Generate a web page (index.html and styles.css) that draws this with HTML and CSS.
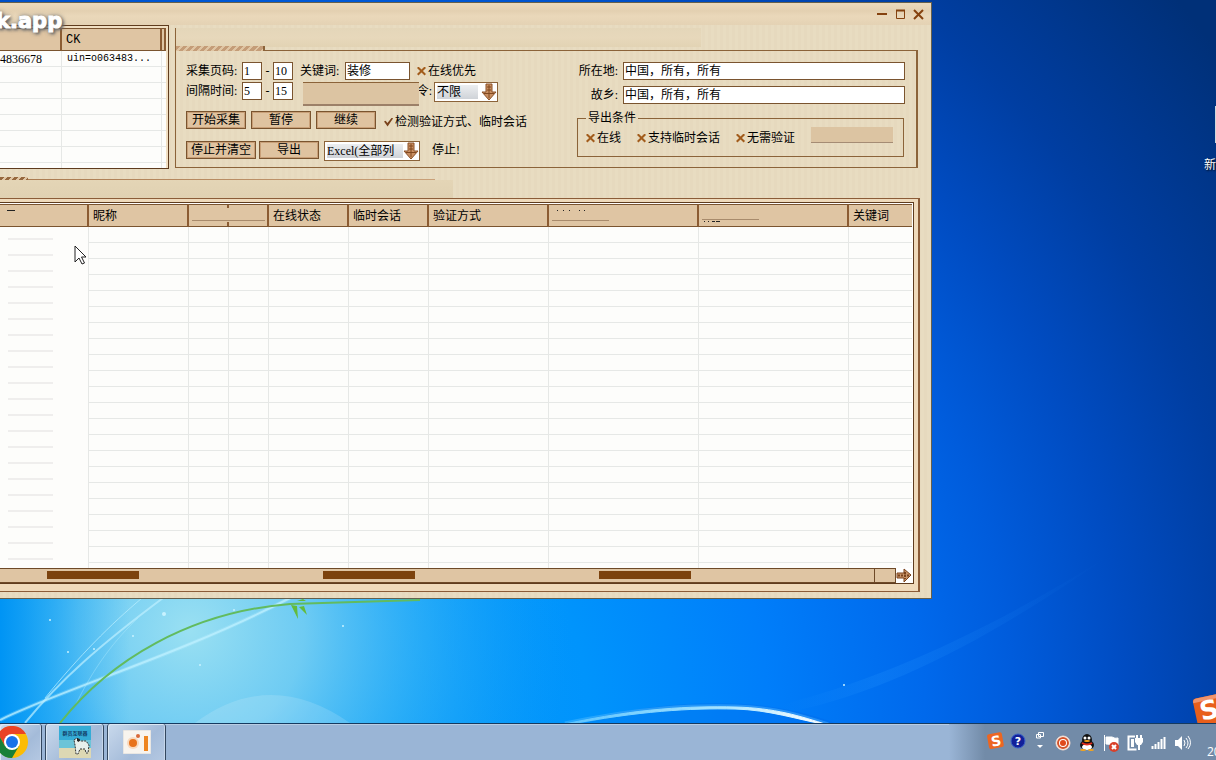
FILE: index.html
```html
<!DOCTYPE html>
<html lang="zh-CN">
<head>
    <meta charset="UTF-8">
    <meta name="viewport" content="width=device-width, initial-scale=1.0">
    <title>采集</title>
    <link rel="stylesheet" href="styles.css">
</head>
<body>
    <div class="desktop">
        <!-- 壁纸 -->
        <svg class="wallpaper" viewBox="0 0 1216 723" preserveAspectRatio="none">
            <defs>
                <radialGradient id="sky" gradientUnits="userSpaceOnUse" cx="320" cy="720" r="1120">
                    <stop offset="0" stop-color="#0a9cf8"/>
                    <stop offset="0.24" stop-color="#0094fc"/>
                    <stop offset="0.4" stop-color="#007efa"/>
                    <stop offset="0.54" stop-color="#0069ec"/>
                    <stop offset="0.62" stop-color="#005cdc"/>
                    <stop offset="0.72" stop-color="#004cc2"/>
                    <stop offset="0.83" stop-color="#003ea2"/>
                    <stop offset="1" stop-color="#003078"/>
                </radialGradient>
                <radialGradient id="glow" gradientUnits="userSpaceOnUse" cx="190" cy="630" r="380">
                    <stop offset="0" stop-color="#9ae0f2"/>
                    <stop offset="0.3" stop-color="#80d4f2" stop-opacity="0.85"/>
                    <stop offset="0.6" stop-color="#44bcf6" stop-opacity="0.55"/>
                    <stop offset="1" stop-color="#10a0fa" stop-opacity="0"/>
                </radialGradient>
                <linearGradient id="leftShade" x1="0" x2="1" y1="0" y2="0">
                    <stop offset="0" stop-color="#0094f4"/>
                    <stop offset="0.3" stop-color="#0a9cf4" stop-opacity="0.7"/>
                    <stop offset="1" stop-color="#20a8f4" stop-opacity="0"/>
                </linearGradient>
                <linearGradient id="arcLight" x1="0" x2="1" y1="0" y2="0">
                    <stop offset="0" stop-color="#5cc4ff"/>
                    <stop offset="0.6" stop-color="#a8e4ff"/>
                    <stop offset="1" stop-color="#ffffff"/>
                </linearGradient>
                <linearGradient id="ray" x1="0" x2="1" y1="0" y2="0">
                    <stop offset="0" stop-color="#2a9aff" stop-opacity="0"/>
                    <stop offset="0.3" stop-color="#2a9aff" stop-opacity="0.2"/>
                    <stop offset="1" stop-color="#2a9aff" stop-opacity="0"/>
                </linearGradient>
            </defs>
            <rect width="1216" height="723" fill="url(#sky)"/>
            <rect width="600" height="423" y="300" fill="url(#glow)"/>
            <rect width="130" height="423" y="300" fill="url(#leftShade)"/>
            <path d="M195 723 Q270 667 350 723Z" fill="#fff" opacity="0.14"/>
            <g fill="none" stroke="#bdf0ff">
                <path d="M0 720 C60 690 180 655 290 598" stroke-width="4" opacity="0.25"/>
                <path d="M0 720 C60 690 180 655 290 598" stroke-width="2" opacity="0.75"/>
                <path d="M25 723 C60 680 100 645 163 598" stroke-width="2" opacity="0.7"/>
                <path d="M45 698 C80 655 110 625 142 598" opacity="0.7"/>
                <path d="M75 706 C95 665 115 640 138 618" opacity="0.35"/>
            </g>
            <path d="M60 723 C110 660 190 612 290 604 L420 600" fill="none" stroke="#62bb5e" stroke-width="2"/>
            <path d="M291 605 l7 14 -1 -13z M299 607 l8 8 -3 -9z M297 601 l6 -2 3 2z" fill="#63bb3c"/>
            <g fill="#c8f2ff">
                <circle cx="164" cy="614" r="2"/><circle cx="68" cy="652" r="1"/><circle cx="94" cy="649" r="1"/>
                <circle cx="234" cy="610" r="1"/><circle cx="133" cy="636" r="1"/><circle cx="50" cy="620" r="1"/>
                <circle cx="343" cy="626" r="1"/><circle cx="200" cy="665" r="1"/><circle cx="844" cy="685" r="1"/>
            </g>
            <path d="M780 705 C880 680 990 630 1110 555 C1010 625 900 690 790 712Z" fill="url(#ray)"/>
            <path d="M570 723 Q730 683 835 723Z" fill="#0060e0" opacity="0.2"/>
            <path d="M565 724 C640 708 690 706 735 707 C775 708 800 716 828 725" fill="none" stroke="#7cd0ff" stroke-width="5" opacity="0.3"/>
            <path d="M565 724 C640 708 690 706 735 707 C775 708 800 716 828 725 C795 719 770 710 735 709 C690 708 640 711 565 725Z" fill="url(#arcLight)" stroke="url(#arcLight)"/>
        </svg>

        <!-- 程序窗口 -->
        <div class="window">
            <div class="title_bar">
                <button class="win_btn" aria-label="最小化"><svg width="11" height="11"><path d="M0 5h10" stroke="#85420f" stroke-width="2"/></svg></button>
                <button class="win_btn" aria-label="最大化"><svg width="11" height="11"><path d="M1.500 1.500h8v8h-8z" fill="none" stroke="#85420f"/><path d="M1 1.500h9" stroke="#85420f" stroke-width="2"/></svg></button>
                <button class="win_btn" aria-label="关闭"><svg width="11" height="11"><path d="M1 1l9 9M10 1l-9 9" stroke="#85420f" stroke-width="2"/></svg></button>
            </div>

            <div class="top">
                <div class="account">
                    <table class="account_table">
                        <colgroup><col class="c_qq"><col class="c_ck"><col></colgroup>
                        <thead>
                            <tr><th></th><th>CK</th><th></th></tr>
                        </thead>
                        <tbody>
                            <tr><td class="qq">4836678</td><td class="ck">uin=o063483...</td><td></td></tr>
                        </tbody>
                    </table>
                </div>

                <div class="panel">
                    <div class="tabs"></div>
                    <div class="panel_body">
                        <div class="left_form">
                            <div class="row">
                                <label for="page1">采集页码:</label>
                                <input class="num" id="page1" type="text" value="1">
                                <span class="dash">-</span>
                                <input class="num" type="text" value="10" aria-label="结束页码">
                                <label class="key_label" for="keyword">关键词:</label>
                                <input class="keyword" id="keyword" type="text" value="装修">
                                <label class="check online"><input type="checkbox">在线优先</label>
                            </div>
                            <div class="row">
                                <label for="time1">间隔时间:</label>
                                <input class="num" id="time1" type="text" value="5">
                                <span class="dash">-</span>
                                <input class="num" type="text" value="15" aria-label="最大间隔">
                                <span class="cover"></span>
                                <label class="age" for="age">令:</label>
                                <span class="select age_select">
                                    <select id="age"><option>不限</option></select>
                                    <svg width="16" height="18"><use href="#arrow"/></svg>
                                </span>
                            </div>
                            <div class="row row_btn">
                                <button class="btn">开始采集</button>
                                <button class="btn">暂停</button>
                                <button class="btn">继续</button>
                                <label class="check verify"><input type="checkbox" checked>检测验证方式、临时会话</label>
                            </div>
                            <div class="row row_export">
                                <button class="btn btn_stop">停止并清空</button>
                                <button class="btn">导出</button>
                                <span class="select excel">
                                    <select aria-label="导出格式"><option>Excel(全部列</option></select>
                                    <svg width="16" height="18"><use href="#arrow"/></svg>
                                </span>
                                <span class="state">停止!</span>
                            </div>
                        </div>

                        <div class="right_form">
                            <div class="place">
                                <label for="place">所在地:</label>
                                <input id="place" type="text" value="中国，所有，所有">
                            </div>
                            <div class="place">
                                <label for="home">故乡:</label>
                                <input id="home" type="text" value="中国，所有，所有">
                            </div>
                            <fieldset>
                                <legend>导出条件</legend>
                                <div class="conditions">
                                    <label class="check"><input type="checkbox">在线</label>
                                    <label class="check"><input type="checkbox">支持临时会话</label>
                                    <label class="check"><input type="checkbox">无需验证</label>
                                    <span class="blank"></span>
                                </div>
                            </fieldset>
                        </div>
                    </div>
                </div>
            </div>

            <div class="strip"></div>

            <div class="frame">
                <div class="list">
                    <table class="list_table">
                        <colgroup>
                            <col class="w89"><col class="w100"><col class="w40"><col class="w40"><col class="w80">
                            <col class="w80"><col class="w120"><col class="w150"><col class="w150"><col>
                        </colgroup>
                        <thead>
                            <tr>
                                <th class="first"></th>
                                <th>昵称</th>
                                <th class="tick"></th>
                                <th class="tick_end"></th>
                                <th>在线状态</th>
                                <th>临时会话</th>
                                <th>验证方式</th>
                                <th class="worn"></th>
                                <th class="worn worn_low"></th>
                                <th>关键词</th>
                            </tr>
                        </thead>
                        <tbody>
                            <tr><td class="first"></td><td></td><td></td><td></td><td></td><td></td><td></td><td></td><td></td><td></td></tr>
                        </tbody>
                    </table>
                    <div class="scroll">
                        <div class="track"></div>
                        <div class="grip"></div>
                        <button class="scroll_btn" aria-label="向右">
                            <svg width="16" height="15"><path d="M1 5h7V1l7 6-7 7v-4H1z" fill="#c99468" stroke="#7a431c"/><path d="M2 7.500h11M9 4v7" stroke="#7a431c" stroke-width="2" stroke-dasharray="2 1"/></svg>
                        </button>
                    </div>
                </div>
            </div>
        </div>

        <div class="watermark">k.app</div>

        <!-- 桌面图标 -->
        <div class="folder"><i></i><span>新</span></div>
        <svg class="sogou" width="36" height="34" viewBox="0 0 36 34">
            <g transform="rotate(-12 17 17)"><rect x="3" y="3" width="30" height="29" rx="3" fill="#e85f1c"/><path d="M3 7q0-4 4-4h22q4 0 4 4z" fill="#f0946c"/>
            <text x="17" y="26" text-anchor="middle" font-family="DejaVu Sans" font-weight="bold" font-size="26" fill="#fff">S</text></g>
        </svg>
        <svg class="cursor" width="13" height="21"><path d="M1 1v16l4-4 3 6 2.500-1-3-6H12z" fill="#fff" stroke="#222"/></svg>
    </div>

    <!-- 任务栏 -->
    <div class="taskbar">
        <button class="task task_chrome" aria-label="Chrome">
            <svg width="32" height="32" viewBox="-16 -16 32 32">
                <circle r="16" fill="#fbbc05"/>
                <path d="M0-8H13.900A16 16 0 0 0-13.900-8L-7 4Z" fill="#ea4325"/>
                <path d="M-13.900-8A16 16 0 0 0 0 16L7 4-7 4Z" fill="#188038"/>
                <circle r="8" fill="#fff"/><circle r="6" fill="#1a73e8"/>
            </svg>
        </button>
        <button class="task" aria-label="采集工具">
            <svg width="32" height="32" viewBox="0 0 32 32">
                <rect width="32" height="23" fill="#35acd6"/><rect y="14" width="32" height="9" fill="#6cc4d8"/><rect y="22" width="32" height="10" fill="#ddd8b4"/>
                <text x="16" y="9" text-anchor="middle" font-family="Noto Sans CJK SC" font-weight="bold" font-size="5" fill="#123c66">群员互联器</text>
                <path d="M15 14l3-2 3 3h6l3 4-1 8h-2l-1-4h-5l-2 5h-2l-1-9z" fill="#e8f0ec" stroke="#333" stroke-dasharray="2 1"/>
                <path d="M18 12l3 1-1 3-2-1z" fill="#222"/>
            </svg>
        </button>
        <button class="task" aria-label="录屏">
            <svg width="28" height="24" viewBox="0 0 28 24">
                <rect width="28" height="24" fill="#f8f4ee" stroke="#d8d8d8"/>
                <circle cx="10" cy="13" r="6" fill="#f9d9bd"/><circle cx="10" cy="13" r="4" fill="#e8731c"/><circle cx="15" cy="6" r="2" fill="#d9693a"/>
                <rect x="21" y="6" width="4" height="15" fill="#ee8520"/>
            </svg>
        </button>

        <div class="tray">
            <svg width="22" height="24" viewBox="0 0 22 24">
                <g transform="rotate(-10 11 11)"><rect x="3" y="3" width="15" height="15" rx="2" fill="#ec6622"/><text x="11" y="16" text-anchor="middle" font-family="DejaVu Sans" font-weight="bold" font-size="14" fill="#fff">S</text></g>
            </svg>
            <svg width="22" height="24" viewBox="0 0 22 24">
                <circle cx="11" cy="11" r="7" fill="#12209a" stroke="#3a62c8"/><text x="11" y="15" text-anchor="middle" font-family="DejaVu Sans" font-weight="bold" font-size="11" fill="#fff">?</text>
            </svg>
            <svg width="22" height="24" viewBox="0 0 22 24">
                <path d="M9.500 2.500h5v4h-5zM7.500 4.500h4v3.500h-4z" fill="#728ba8" stroke="#fff"/><path d="M8 15h6l-3 3z" fill="#fff"/>
            </svg>
            <svg viewBox="0 0 24 24"><circle cx="12" cy="13" r="7" fill="#fff" stroke="#f0d8cc"/><circle cx="12" cy="13" r="5" fill="#fff" stroke="#d4532a" stroke-width="2"/><circle cx="12" cy="13" r="3" fill="#e04a1c"/></svg>
            <svg viewBox="0 0 24 24">
                <ellipse cx="12" cy="15" rx="7" ry="5" fill="#111"/><ellipse cx="12" cy="10" rx="5" ry="6" fill="#111"/><ellipse cx="12" cy="17" rx="5" ry="3" fill="#fff"/>
                <circle cx="10" cy="8" r="1.500" fill="#fff"/><circle cx="14" cy="8" r="1.500" fill="#fff"/><ellipse cx="12" cy="11" rx="3" ry="1" fill="#f6a41a"/>
                <path d="M7 13q5 3 10 0" stroke="#e22f20" stroke-width="2" fill="none"/><ellipse cx="8" cy="20" rx="3" ry="1" fill="#f6a41a"/><ellipse cx="16" cy="20" rx="3" ry="1" fill="#f6a41a"/>
            </svg>
            <svg viewBox="0 0 24 24"><path d="M5.500 5v16M7 7h6q3 2 6 1v7h-6q-3-1-6-1z" fill="#fff" stroke="#fff"/><circle cx="15" cy="17" r="5" fill="#d8412b"/><path d="M13 15l4 4M17 15l-4 4" stroke="#fff" stroke-width="2"/></svg>
            <svg viewBox="0 0 24 24"><path d="M12 6.500H5.500v13h8" fill="none" stroke="#fff" stroke-width="2"/><rect x="8" y="9" width="3" height="8" fill="#fff"/><path d="M14 5v4M18 5v4M16 13v7" stroke="#fff" stroke-width="2"/><path d="M12 8h8v4l-2 3h-4l-2-3z" fill="#fff"/></svg>
            <svg viewBox="0 0 24 24"><path d="M5.500 16v3M8.500 14v5M11.500 12v7M14.500 9v10M17.500 7v12" stroke="#fff" stroke-width="2"/></svg>
            <svg viewBox="0 0 24 24"><path d="M4 10h3l4-4v14l-4-4H4z" fill="#fff"/><path d="M13 10q2 3 0 6M15 8q4 5 0 10M17 6q5 7 0 13" fill="none" stroke="#fff"/></svg>
            <span class="clock">20</span>
        </div>
    </div>

    <svg class="defs">
        <symbol id="arrow" viewBox="0 0 16 18">
            <path d="M5 1h6v8h4l-7 8-7-8h4z" fill="#c98f62" stroke="#8a5026"/>
            <path d="M8 2v13M3 10.500h10M6 4h4M6 7h4" stroke="#80481f" fill="none"/>
        </symbol>
    </svg>
</body>
</html>
```
FILE: styles.css
```css
*{
    box-sizing: border-box;
}
body{
    margin: 0;
    height: 100vh;
    display: flex;
    flex-direction: column;
    overflow: hidden;
    font: 12px/16px "Liberation Serif", "Noto Sans CJK SC", sans-serif;
    color: #000;
}
input, select, button{
    font: inherit;
    color: inherit;
    margin: 0;
}
.defs{
    display: none;
}

/* 桌面 */
.desktop{
    flex: 1;
    min-height: 0;
    position: relative;
    overflow: hidden;
}
.wallpaper{
    display: block;
    width: 100%;
    height: 100%;
}
.watermark{
    position: absolute;
    left: -4px;
    top: 8px;
    font: bold 21px/26px "DejaVu Sans", sans-serif;
    color: #fff;
    -webkit-text-stroke: 1px #fff;
    text-shadow: 2px 2px 3px #666, 0 0 4px #777, 1px 1px 5px #777;
}
.folder{
    position: absolute;
    right: 0;
    top: 106px;
    width: 12px;
    color: #fff;
    text-shadow: 1px 1px 2px #000;
}
.folder i{
    display: block;
    width: 1px;
    height: 37px;
    margin: 0 0 14px auto;
    background-color: #cfd8dc;
}
.sogou{
    position: absolute;
    right: -12px;
    bottom: -4px;
}
.cursor{
    position: absolute;
    left: 74px;
    top: 245px;
}

/* 窗口 */
.window{
    position: absolute;
    left: 0;
    top: 2px;
    right: 284px;
    bottom: 124px;
    display: flex;
    flex-direction: column;
    border: 1px solid #66604c;
    border-left: none;
    background: repeating-linear-gradient(90deg, #e6d9be 0 3px, #e8dcc1 3px 6px);
}
.title_bar{
    display: flex;
    flex: none;
    justify-content: flex-end;
    gap: 7px;
    height: 22px;
    padding: 0 7px;
    background: linear-gradient(#ecdabd, #e3d0b1 35%, #ead8ba 60%, #e4d2b4);
}
.win_btn{
    width: 11px;
    padding: 0;
    border: none;
    background: none;
}
.win_btn svg{
    display: block;
}
.top{
    display: flex;
    flex: none;
    height: 144px;
}

/* 账号表格 */
.account{
    flex: none;
    width: 169px;
    padding: 2px 2px 0 0;
    border: 1px solid #5f3c1e;
    border-left: none;
    background-color: #f1dfc2;
}
table{
    border-collapse: separate;
    border-spacing: 0;
    table-layout: fixed;
    width: 100%;
    height: 100%;
}
th{
    padding: 0 0 0 4px;
    text-align: left;
    font-weight: normal;
    background-color: #dfc5a3;
    border-right: 2px solid #8b5c33;
    border-top: 1px solid #7a542f;
    border-bottom: 1px solid #7a542f;
    white-space: nowrap;
}
td{
    padding: 0;
    vertical-align: top;
    border-right: 1px solid #e6e8e6;
    background: repeating-linear-gradient(#fdfdfb 0 15px, #e6e8e6 15px 16px);
}
.account_table th{
    height: 23px;
    font-family: "Liberation Mono", monospace;
}
.account_table td:last-child{
    border-right: none;
}
.c_qq{
    width: 62px;
}
.c_ck{
    width: 100px;
}
.qq{
    line-height: 16px;
}
.ck{
    padding-left: 5px;
    font: 10px/16px "Liberation Mono", monospace;
}

/* 设置面板 */
.panel{
    flex: 1;
    display: flex;
    flex-direction: column;
    margin: 3px 13px 1px 6px;
}
.tabs{
    position: relative;
    flex: none;
    height: 22px;
    border-left: 1px solid #8b6339;
    background: linear-gradient(#e4d6b9, #e7d8bb 50%, #e2d3b4) 0 0 / 525px 19px no-repeat;
}
.tabs::after{
    content: "";
    position: absolute;
    left: 0;
    bottom: -1px;
    width: 87px;
    height: 5px;
    border-right: 2px solid #8b6339;
    background: repeating-linear-gradient(135deg, #c49d78 0 3px, #dfc5a3 3px 5px);
}
.panel_body{
    flex: 1;
    display: flex;
    padding: 11px 11px 0 10px;
    border: 1px solid #8b6339;
    border-right-width: 2px;
}
.left_form{
    flex: none;
    width: 391px;
}
.row{
    display: flex;
    align-items: flex-start;
    height: 20px;
    line-height: 18px;
    white-space: nowrap;
}
.row > label:first-child{
    width: 56px;
}
.row input[type=text], .place input{
    height: 18px;
    padding: 0 1px;
    border: 1px solid #7a542f;
    border-radius: 0;
    background-color: #fff;
}
.row .num{
    width: 20px;
}
.dash{
    width: 11px;
    text-align: center;
}
.key_label{
    width: 45px;
    margin-left: 7px;
}
.row .keyword{
    width: 65px;
}
.check{
    display: flex;
    align-items: center;
}
.check input{
    appearance: none;
    width: 9px;
    height: 9px;
    margin-right: 2px;
    background-color: #a25c1c;
    clip-path: polygon(0 16%, 16% 0, 50% 34%, 84% 0, 100% 16%, 66% 50%, 100% 84%, 84% 100%, 50% 66%, 16% 100%, 0 84%, 34% 50%);
}
.check input:checked{
    background-color: #7a431c;
    clip-path: polygon(0 45%, 18% 35%, 38% 62%, 88% 0, 100% 12%, 40% 100%);
}
.online{
    margin-left: 7px;
}
.verify{
    height: 22px;
    margin-left: 3px;
}
.cover{
    width: 116px;
    height: 24px;
    margin: 0 0 0 10px;
    border-top: 1px solid #8b6339;
    border-bottom: 2px solid #9c8068;
    background-color: #dcc4a2;
}
.age{
    display: flex;
    justify-content: flex-end;
    width: 13px;
    margin-right: 2px;
    overflow: hidden;
}
.select{
    display: flex;
    align-items: center;
    height: 20px;
    border: 1px solid #8b6339;
    background-color: #fff;
}
.select select{
    flex: 1;
    min-width: 0;
    height: 14px;
    margin-left: 2px;
    padding: 0;
    appearance: none;
    border: none;
    border-radius: 0;
    line-height: 14px;
    background: linear-gradient(#eceef0, #cfd3d8);
}
.age_select{
    width: 64px;
}
.age_select select{
    margin-right: 3px;
}
.excel{
    width: 96px;
    margin-left: 2px;
}
.row_btn{
    gap: 5px;
    margin-top: 9px;
}
.row_export{
    gap: 3px;
    margin-top: 10px;
}
.btn{
    width: 60px;
    height: 18px;
    padding: 0;
    border: 1px solid #7a542f;
    box-shadow: inset 0 0 0 1px #c9a078;
    background-color: #dfc3a0;
    line-height: 16px;
}
.btn_stop{
    width: 70px;
}
.state{
    margin-left: 9px;
}
.right_form{
    flex: 1;
    min-width: 0;
}
.place{
    display: flex;
    height: 24px;
    line-height: 18px;
}
.place label{
    width: 46px;
    padding-right: 5px;
    text-align: right;
}
.place input{
    flex: 1;
    min-width: 0;
}
fieldset{
    height: 46px;
    margin: 1px 1px 0 0;
    padding: 0 10px 0 8px;
    border: 1px solid #8b6339;
    min-width: 0;
}
legend{
    padding: 0 2px;
    line-height: 14px;
}
.conditions{
    display: flex;
    gap: 16px;
    margin-top: 5px;
    white-space: nowrap;
}
.blank{
    width: 82px;
    height: 16px;
    margin: -3px 0 0 auto;
    border-bottom: 1px solid #a58c74;
    background-color: #dcc4a2;
}

/* 分隔条 */
.strip{
    position: relative;
    flex: none;
    height: 29px;
    background: linear-gradient(90deg, #a8794e, #c9a078) 0 10px / 435px 1px no-repeat,
        linear-gradient(#e4d5b6, #e0d1b2) 0 11px / 453px 18px no-repeat;
}
.strip::before{
    content: "";
    position: absolute;
    left: 0;
    top: 8px;
    width: 28px;
    height: 3px;
    background: repeating-linear-gradient(135deg, #96683e 0 3px, #dfc5a3 3px 5px);
}

/* 结果列表 */
.frame{
    flex: 1;
    display: flex;
    min-height: 0;
    margin: 0 11px 6px 0;
    padding: 3px 4px 7px 0;
    border: 1px solid #8b5c38;
    border-right-width: 2px;
    border-left: none;
    background-color: #efdabb;
}
.list{
    flex: 1;
    display: flex;
    flex-direction: column;
    min-width: 0;
    padding: 1px 1px 0 0;
    border: 1px solid #5f3c1e;
    border-left: none;
    background-color: #fff;
}
.list_table{
    flex: 1;
}
.list_table th{
    height: 23px;
}
.list_table th:last-child{
    border-right: none;
}
.list_table td:last-child{
    border-right: none;
}
.w89{ width: 89px; }
.w100{ width: 100px; }
.w40{ width: 40px; }
.w80{ width: 80px; }
.w120{ width: 120px; }
.w150{ width: 150px; }
th.first{
    background: linear-gradient(#222, #222) 7px 5px / 8px 1px no-repeat #dfc5a3;
}
td.first{
    background: repeating-linear-gradient(transparent 0 11px, #efeeed 11px 13px, transparent 13px 16px) 8px 0 / 45px 100% no-repeat #fdfdfb;
}
/* 磨损的表头 */
th.tick{
    border-right: none;
    background: linear-gradient(#8b5c33, #8b5c33) 100% 0 / 2px 3px no-repeat,
        linear-gradient(#8b5c33, #8b5c33) 100% 100% / 2px 4px no-repeat,
        linear-gradient(#a88b6c, #a88b6c) 3px 15px / 37px 1px no-repeat #dfc5a3;
}
th.tick_end{
    background: linear-gradient(#a88b6c, #a88b6c) 0 15px / 36px 1px no-repeat #dfc5a3;
}
th.worn{
    background: linear-gradient(90deg, #222 1px, transparent 1px) 8px 5px / 7px 1px repeat-x,
        linear-gradient(#dfc5a3, #dfc5a3) 0 0 no-repeat,
        linear-gradient(#a88b6c, #a88b6c) 3px 15px / 57px 1px no-repeat #dfc5a3;
    background: linear-gradient(90deg, #222 1px, transparent 1px 6px, #222 6px 7px, transparent 7px 12px, #222 12px 13px, transparent 13px 22px, #222 22px 23px, transparent 23px 27px, #222 27px 28px, transparent 28px) 8px 5px / 30px 1px no-repeat,
        linear-gradient(#a88b6c, #a88b6c) 3px 15px / 57px 1px no-repeat #dfc5a3;
}
th.worn_low{
    background: linear-gradient(90deg, #222 1px, transparent 1px 4px, #222 4px 5px, transparent 5px 8px, #222 8px 11px, transparent 11px 12px, #222 12px) 5px 16px / 16px 1px no-repeat,
        linear-gradient(#a88b6c, #a88b6c) 3px 14px / 57px 1px no-repeat #dfc5a3;
}
.scroll{
    flex: none;
    display: flex;
    height: 15px;
}
.track, .grip{
    border: 1px solid #6e4a28;
    border-left: none;
    background-color: #dfc5a3;
}
.track{
    flex: 1;
    background: repeating-linear-gradient(90deg, transparent 0 47px, #7c430e 47px 139px, transparent 139px 276px) 0 2px / 100% 8px no-repeat #dfc5a3;
}
.grip{
    width: 21px;
}
.scroll_btn{
    width: 16px;
    padding: 0;
    border: none;
    background: none;
}
.scroll_btn svg{
    display: block;
}

/* 任务栏 */
.taskbar{
    flex: none;
    display: flex;
    gap: 3px;
    height: 37px;
    border-top: 1px solid #153a60;
    background-color: #9ab5d6;
    box-shadow: inset 0 1px #b9cde4;
    overflow: hidden;
}
.task{
    display: flex;
    justify-content: center;
    align-items: center;
    width: 59px;
    padding: 0;
    border: 1px solid #33475f;
    border-width: 0 1px;
    border-radius: 3px 3px 0 0;
    box-shadow: inset 1px 1px #dce8f4, inset -1px 0 #c6d6ea;
    background: linear-gradient(135deg, #c9d9ec, #a4bbd9 60%, #b4c8e2);
}
.task_chrome{
    justify-content: flex-start;
    width: 42px;
    border-left: none;
}
.task_chrome svg{
    flex: none;
    margin-left: -4px;
}
.tray{
    display: flex;
    margin-left: auto;
    padding: 6px 0 0 36px;
    background: linear-gradient(90deg, #9ab5d6, #728ba8 36px);
}
.tray svg{
    flex: none;
    height: 24px;
}
.tray svg:not([width]){
    width: 24px;
}
.clock{
    width: 9px;
    margin: 14px 0 0 12px;
    font: 12px/16px "Open Sans", sans-serif;
    color: #fff;
}
```
